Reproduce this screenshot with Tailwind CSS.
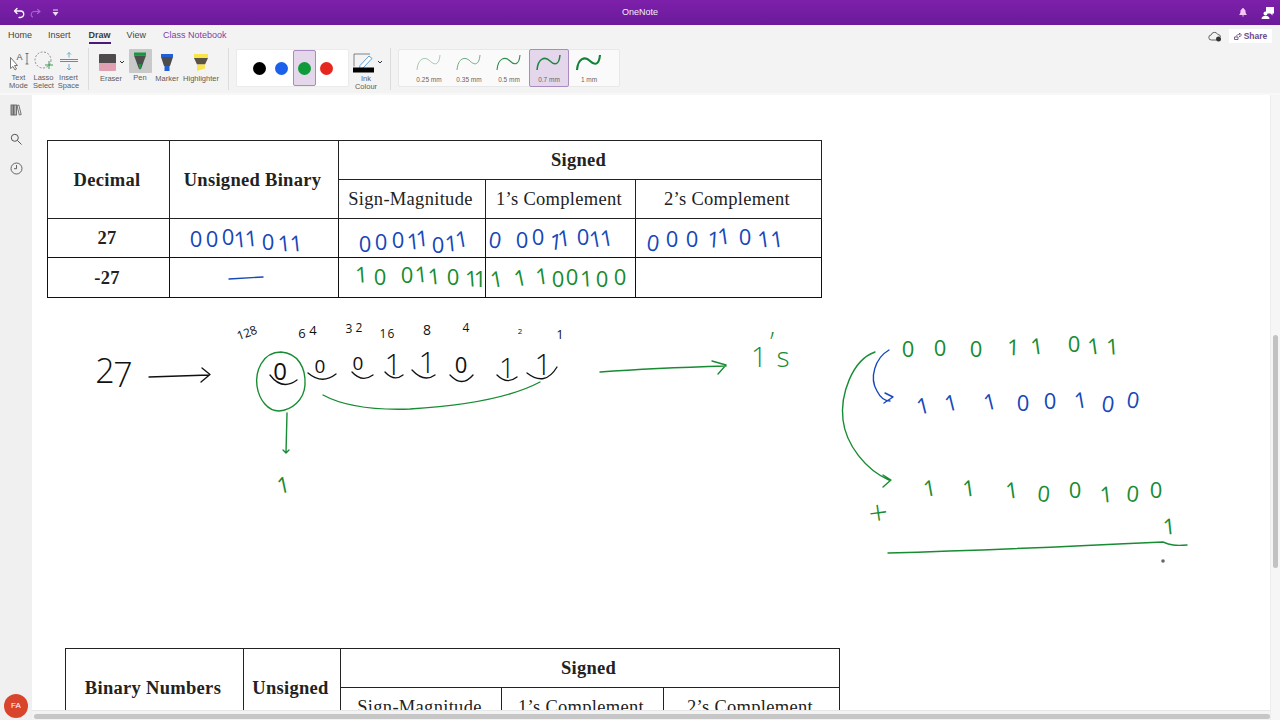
<!DOCTYPE html>
<html lang="en">
<head>
<meta charset="utf-8">
<title>OneNote</title>
<script src="https://cdn.jsdelivr.net/npm/@tailwindcss/browser@4"></script>
</head>
<body class="w-[1280px] h-[720px] overflow-hidden flex flex-col bg-[#f3f3f3] font-['Liberation_Sans',Arial,sans-serif]">

<!-- Title bar -->
<header class="h-[25px] shrink-0 grid grid-cols-3 items-center bg-gradient-to-b from-[#7d20ab] to-[#6b1a9a] text-white">
  <div class="flex items-center gap-[5px] pl-[13px]">
    <svg width="12" height="12" viewBox="0 0 12 12" fill="none" stroke="#fff" stroke-width="1.3" stroke-linecap="round" stroke-linejoin="round"><path d="M4 1.5 1.5 4 4 6.5M1.5 4H7.5a3 3 0 0 1 0 6.5H6"/></svg>
    <svg width="11" height="10" viewBox="0 0 11 10" fill="none" stroke="#a866d0" stroke-width="1.1" stroke-linecap="round" stroke-linejoin="round"><path d="M7.5 1.5 10 3.5 7.5 5.5M10 3.5H4a3 3 0 0 0-1.5 5.5"/></svg>
    <svg class="ml-[6px]" width="7" height="8" viewBox="0 0 7 8" fill="#f0dcf8"><rect x="1" y="0.5" width="5" height="1"/><path d="M0.5 3h6L3.5 7z"/></svg>
  </div>
  <div class="text-center text-[9px] font-medium text-[#f6eefb]">OneNote</div>
  <div class="flex items-center justify-end gap-[14px] pr-[6px]">
    <svg width="8" height="9" viewBox="0 0 8 9" fill="#f4c6f6"><path d="M4 0a1 1 0 0 1 1 1c1.300.5 1.600 1.700 1.600 3 0 1.100.4 1.700 1.100 2.400V7H.3v-.6C1 5.700 1.400 5.100 1.400 4c0-1.300.3-2.500 1.600-3a1 1 0 0 1 1-1zM3 7.600h2A1 1 0 0 1 3 7.600z"/></svg>
    <svg width="13" height="13" viewBox="0 0 13 13" fill="#fff"><path d="M5 1h8v6.500h-1.500V9.500L9.500 7.500H5z"/><circle cx="4.500" cy="7.500" r="2"/><path d="M0.500 13c0-2.500 2-3.200 4-3.200s4 .7 4 3.200z"/></svg>
  </div>
</header>

<!-- Ribbon -->
<section class="h-[70px] shrink-0 flex flex-col text-[#4a4a4a]">
  <div class="h-[22px] relative flex items-center pl-2 pr-2 gap-4 text-[9px] text-[#444]">
    <span>Home</span><span>Insert</span>
    <span class="ml-[2px] relative font-semibold text-[#3a3a3a]">Draw<span class="absolute left-0 right-0 top-[13px] h-[2px] bg-[#4b1a78]"></span></span>
    <span>View</span><span class="ml-[1px] text-[#7b3fa6]">Class Notebook</span>
    <div class="ml-auto flex items-center gap-[7px]">
      <svg width="14" height="11" viewBox="0 0 14 11" fill="none"><path d="M3.500 9a2.500 2.500 0 0 1-.4-5 3.500 3.500 0 0 1 6.600-.6A2.800 2.800 0 0 1 12.500 6" stroke="#555" stroke-width="0.9"/><path d="M3.500 9H8" stroke="#555" stroke-width="0.9"/><circle cx="10.500" cy="8" r="2.500" fill="#333"/></svg>
      <div class="w-[43px] h-[14px] bg-white flex items-center justify-center gap-[2px] text-[8.500px] font-semibold text-[#6d4c86]">
        <svg width="8" height="8" viewBox="0 0 8 8" fill="none" stroke="#6d4c86" stroke-width="0.9"><path d="M0.500 7.500V5h3.500v2.500zM2 4.500C2.500 3 4 2.500 5.500 2.500V1L7.500 3 5.500 5V3.800"/></svg>Share
      </div>
    </div>
  </div>

  <div class="h-[46px] flex items-stretch pl-[6px] text-[7.500px] leading-[8px] text-[#5c5c5c] text-center">
    <!-- Text mode -->
    <div class="w-[25px] flex flex-col items-center">
      <svg class="mt-[2px] h-[24px]" width="24" height="24" viewBox="0 0 24 24" fill="none">
        <text x="12.500" y="11" font-size="9" fill="#555" text-anchor="middle" font-family="Liberation Sans">A</text>
        <path d="M18.500 4.500h3M20 4.500V15M18.500 15h3" stroke="#555" stroke-width="0.8"/>
        <path d="M3.500 8.500v11l2.500-2 2 3.500 1.500-1-2-3.500h3z" fill="#fff" stroke="#555" stroke-width="0.8"/>
      </svg>
      <span class="mt-[1px]">Text<br>Mode</span>
    </div>
    <!-- Lasso -->
    <div class="w-[25px] flex flex-col items-center">
      <svg class="mt-[2px]" width="24" height="24" viewBox="0 0 24 24" fill="none">
        <circle cx="11" cy="11" r="8" stroke="#777" stroke-width="0.8" stroke-dasharray="2 1.500"/>
        <path d="M17 12v8M13 16h8" stroke="#3a9a55" stroke-width="1"/>
      </svg>
      <span class="mt-[1px]">Lasso<br>Select</span>
    </div>
    <!-- Insert space -->
    <div class="w-[25px] flex flex-col items-center">
      <svg class="mt-[2px]" width="24" height="24" viewBox="0 0 24 24" fill="none">
        <path d="M3 10.500h18M3 12.500h18" stroke="#666" stroke-width="0.8"/>
        <path d="M12 3.500v5M10 5.500l2-2 2 2M12 15v6M10 19l2 2 2-2" stroke="#62a8c4" stroke-width="0.9"/>
      </svg>
      <span class="mt-[1px]">Insert<br>Space</span>
    </div>
    <div class="ml-[7px] mt-[1px] mb-[3px] w-px bg-[#dcdcdc]"></div>

    <!-- Eraser -->
    <div class="ml-[7px] w-[30px] flex flex-col items-center">
      <div class="mt-[5px] h-[21px] flex items-center self-start ml-[3px] gap-[3px]">
        <div class="w-[17px] h-[17px] flex flex-col rounded-[1px] overflow-hidden"><div class="h-[9px] bg-[#4f4a4c]"></div><div class="flex-1 bg-[#dfa0b2]"></div></div>
        <svg width="6" height="5" viewBox="0 0 6 5" fill="none" stroke="#333" stroke-width="1"><path d="M1 1l2 2 2-2"/></svg>
      </div>
      <span class="mt-[2px]">Eraser</span>
    </div>
    <!-- Pen -->
    <div class="ml-[2px] w-[24px] flex flex-col items-center">
      <div class="mt-[2px] h-[24px] w-[23px] bg-[#c9c9c9] rounded-[1px] flex justify-center items-center">
        <svg width="14" height="18" viewBox="0 0 14 18"><rect x="1" y="0.500" width="12" height="3" fill="#17983f"/><path d="M1 3.500h12L8 17H6z" fill="#4d4d4d"/><path d="M5.600 12h2.800L7.500 17.500h-1z" fill="#17983f"/></svg>
      </div>
      <span class="mt-[1px]">Pen</span>
    </div>
    <!-- Marker -->
    <div class="ml-[3px] w-[24px] flex flex-col items-center">
      <svg class="mt-[5px] h-[21px]" width="14" height="18" viewBox="0 0 14 18"><rect x="1" y="0.500" width="12" height="3" fill="#1f5fd8"/><path d="M1 3.500h12l-3 9H4z" fill="#4d4d4d"/><rect x="4.500" y="12.500" width="5" height="5" fill="#1f5fd8"/></svg>
      <span class="mt-[2px]">Marker</span>
    </div>
    <!-- Highlighter -->
    <div class="ml-[2px] w-[40px] flex flex-col items-center">
      <svg class="mt-[5px] h-[21px]" width="16" height="18" viewBox="0 0 16 18"><rect x="1" y="0.500" width="14" height="4" fill="#f7e64a"/><path d="M1 4.500h14l-3 6.500H4z" fill="#5a5346"/><path d="M4 11h8v4l-8 2.500z" fill="#f7e64a"/></svg>
      <span class="mt-[2px]">Highlighter</span>
    </div>
    <div class="ml-[7px] mt-[1px] mb-[3px] w-px bg-[#dcdcdc]"></div>

    <!-- Colours -->
    <div class="ml-[7px] mt-[2px] mb-[6px] w-[113px] bg-white rounded-[2px] border border-[#ebebeb] flex items-center pl-[11px]">
      <div class="w-[22.500px] flex justify-center"><span class="w-[13px] h-[13px] rounded-full bg-black"></span></div>
      <div class="w-[22.500px] flex justify-center"><span class="w-[13px] h-[13px] rounded-full bg-[#1a60ea]"></span></div>
      <div class="w-[22.500px] h-[36px] flex items-center justify-center bg-[#e4d6eb] border border-[#a88cbf] rounded-[2px]"><span class="w-[13px] h-[13px] rounded-full bg-[#109a3b]"></span></div>
      <div class="w-[22.500px] flex justify-center"><span class="w-[13px] h-[13px] rounded-full bg-[#e5271f]"></span></div>
    </div>
    <!-- Ink colour -->
    <div class="w-[41px] flex flex-col items-start">
      <div class="mt-[5px] h-[21px] flex items-center ml-[4px] gap-[2px]">
        <svg width="22" height="20" viewBox="0 0 22 20" fill="none">
          <path d="M1 13.500V1h16" stroke="#666" stroke-width="0.8"/>
          <path d="M7 12.500 16 3l3 2.500-9 9.500-3.500 1z" fill="#fff" stroke="#5a9ed6" stroke-width="1"/>
          <rect x="0" y="14.500" width="21" height="5" fill="#000"/>
        </svg>
        <svg width="6" height="5" viewBox="0 0 6 5" fill="none" stroke="#333" stroke-width="1"><path d="M1 1l2 2 2-2"/></svg>
      </div>
      <span class="mt-[2px] w-[34px]">Ink<br>Colour</span>
    </div>
    <div class="mt-[1px] mb-[3px] w-px bg-[#dcdcdc]"></div>

    <!-- Line widths -->
    <div class="ml-[7px] mt-[2px] mb-[6px] w-[222px] bg-[#fafafa] rounded-[2px] border border-[#e8e8e8] flex items-stretch pl-[10px] text-[6.500px] text-[#666]">
      <div class="w-10 flex flex-col items-center">
        <svg class="mt-[2px]" width="28" height="20" viewBox="0 0 28 20" fill="none"><path d="M2 18C3 6 10 4 15 9c4 4 9 5 10-6" stroke="#7fb48f" stroke-width="0.7"/></svg>
        <span class="mt-[4px]">0.25 mm</span>
      </div>
      <div class="w-10 flex flex-col items-center">
        <svg class="mt-[2px]" width="28" height="20" viewBox="0 0 28 20" fill="none"><path d="M2 18C3 6 10 4 15 9c4 4 9 5 10-6" stroke="#5ea476" stroke-width="0.9"/></svg>
        <span class="mt-[4px]">0.35 mm</span>
      </div>
      <div class="w-10 flex flex-col items-center">
        <svg class="mt-[2px]" width="28" height="20" viewBox="0 0 28 20" fill="none"><path d="M2 18C3 6 10 4 15 9c4 4 9 5 10-6" stroke="#2c8d4c" stroke-width="1.100"/></svg>
        <span class="mt-[4px]">0.5 mm</span>
      </div>
      <div class="w-10 -my-px flex flex-col items-center bg-[#e4d6eb] border border-[#a88cbf] rounded-[2px]">
        <svg class="mt-[2px]" width="28" height="20" viewBox="0 0 28 20" fill="none"><path d="M2 18C3 6 10 4 15 9c4 4 9 5 10-6" stroke="#1f8541" stroke-width="1.500"/></svg>
        <span class="mt-[4px]">0.7 mm</span>
      </div>
      <div class="w-10 flex flex-col items-center">
        <svg class="mt-[2px]" width="28" height="20" viewBox="0 0 28 20" fill="none"><path d="M2 18C3 6 10 4 15 9c4 4 9 5 10-6" stroke="#0f8236" stroke-width="2.100"/></svg>
        <span class="mt-[4px]">1 mm</span>
      </div>
    </div>
  </div>
  <div class="h-[2px] bg-[#f8f8f8]"></div>
</section>

<!-- Work area -->
<main class="flex-1 flex min-h-0">
  <!-- Left rail -->
  <aside class="w-[32px] shrink-0 bg-[#f0f0f0] flex flex-col items-center">
    <svg class="mt-[9px]" width="12" height="12" viewBox="0 0 12 12" fill="none" stroke="#666" stroke-width="0.9"><rect x="1" y="1" width="2.500" height="10" fill="#999"/><rect x="4" y="1" width="2.500" height="10" fill="#bbb"/><path d="M7 1.500l1.800-.5 2.400 9.500-1.900.5z"/></svg>
    <svg class="mt-[17px]" width="12" height="12" viewBox="0 0 12 12" fill="none" stroke="#555" stroke-width="1"><circle cx="4.800" cy="4.800" r="3.500"/><path d="M7.500 7.500 11.500 11.500"/></svg>
    <svg class="mt-[17px]" width="13" height="13" viewBox="0 0 13 13" fill="none" stroke="#555" stroke-width="0.9"><circle cx="6.500" cy="6.500" r="5.500"/><path d="M6.500 3v3.700H4"/></svg>
    <div class="mt-auto mb-[2px] w-[24px] h-[24px] rounded-full bg-[#d9452c] text-white text-[8px] font-medium flex items-center justify-center">FA</div>
  </aside>

  <!-- Page column -->
  <div class="w-[1238px] shrink-0 flex flex-col">
    <div class="relative h-[615px] bg-white overflow-hidden font-['Liberation_Serif',serif] text-[#222]">
      <!-- Table one -->
      <table class="ml-[15px] mt-[45px] w-[774px] table-fixed border-collapse text-[18.500px] tracking-[0.3px] text-center [&_td]:pt-[2px] [&_th]:pt-[2px] [&_td]:pr-[3px] [&_th]:pr-[3px]">
        <colgroup><col class="w-[122px]"><col class="w-[169px]"><col class="w-[147px]"><col class="w-[150px]"><col class="w-[186px]"></colgroup>
        <tbody>
          <tr class="h-[39px]">
            <th rowspan="2" class="border border-[#222] font-bold">Decimal</th>
            <th rowspan="2" class="border border-[#222] font-bold">Unsigned Binary</th>
            <th colspan="3" class="border border-[#222] font-bold">Signed</th>
          </tr>
          <tr class="h-[39px]">
            <td class="border border-[#222]">Sign-Magnitude</td>
            <td class="border border-[#222]">1’s Complement</td>
            <td class="border border-[#222]">2’s Complement</td>
          </tr>
          <tr class="h-[39px]">
            <td class="border border-[#111] font-semibold">27</td>
            <td class="border border-[#111]"></td><td class="border border-[#111]"></td><td class="border border-[#111]"></td><td class="border border-[#111]"></td>
          </tr>
          <tr class="h-[40px]">
            <td class="border border-[#111] font-semibold">-27</td>
            <td class="border border-[#111]"></td><td class="border border-[#111]"></td><td class="border border-[#111]"></td><td class="border border-[#111]"></td>
          </tr>
        </tbody>
      </table>

      <!-- Table two -->
      <table class="ml-[33px] mt-[350px] w-[774px] table-fixed border-collapse text-[18.500px] tracking-[0.3px] text-center [&_td]:pt-[2px] [&_th]:pt-[2px] [&_td]:pr-[3px] [&_th]:pr-[3px]">
        <colgroup><col class="w-[178px]"><col class="w-[97px]"><col class="w-[161px]"><col class="w-[162px]"><col class="w-[176px]"></colgroup>
        <tbody>
          <tr class="h-[39px]">
            <th rowspan="2" class="border border-[#222] font-bold">Binary Numbers</th>
            <th rowspan="2" class="border border-[#222] font-bold">Unsigned</th>
            <th colspan="3" class="border border-[#222] font-bold">Signed</th>
          </tr>
          <tr class="h-[39px]">
            <td class="border border-[#222]">Sign-Magnitude</td>
            <td class="border border-[#222]">1’s Complement</td>
            <td class="border border-[#222]">2’s Complement</td>
          </tr>
        </tbody>
      </table>

      <!-- Ink layer -->
      <svg class="absolute inset-0" width="1238" height="615" viewBox="32 95 1238 615" fill="none" stroke-linecap="round" stroke-linejoin="round">
        <!-- Ink written digits -->
        <g font-family="Open Sans, Roboto, sans-serif" font-weight="400" font-size="22" text-anchor="middle">
          <g fill="#1648b8">
            <text x="196 212 228 241 252 268 285 297" y="247 247 245 248 247 250 252 252" rotate="0 0 0 -6 -6 0 -6 -6">00011011</text>
            <text x="365 381 398 414 423 438 452 463" y="252 250 248 250 247 253 252 248" rotate="0 0 0 -6 -6 0 -6 -10">00011011</text>
            <text x="494 522 538 555 565 583 597 608" y="247 248 245 249 247 245 248 247" rotate="8 0 0 6 -8 0 -10 -10">00011011</text>
            <text x="652 672 692 713 725 745 765 778" y="250 247 247 247 245 245 248 248" rotate="8 0 0 4 -8 0 -8 -8">00011011</text>
            <text x="925 953 992 1023 1050 1082 1107 1132" y="415 412 411 411 409 409 411 407" rotate="-14 -14 -14 0 0 -10 8 8">11100100</text>
          </g>
          <g fill="#178c32">
            <text x="362 380 407 422 435 453 472 480" y="283 285 283 283 285 285 287 287" rotate="-4 0 0 -6 -6 0 -4 0">10011011</text>
            <text x="498 522 543 558 572 587 602 620" y="288 287 285 287 285 287 287 285" rotate="-10 -12 -8 0 0 -4 0 0">11100100</text>
            <text x="908 940 976 1013 1038 1074 1095 1113" y="357 356 357 355 355 352 355 355" rotate="0 0 0 2 -8 0 -8 -4">00011011</text>
            <text x="931 970 1013 1043 1075 1107 1132 1156" y="497 497 499 501 498 503 501 498" rotate="-10 -8 -8 6 0 -6 6 0">11100100</text>
            <text x="285" y="494" rotate="-12">1</text>
            <text x="1170" y="535" rotate="-6">1</text>
            <text x="880" y="526" font-size="34" font-weight="300" rotate="-8">+</text>
            <text x="759 772 783" y="367 352 367" font-size="28" font-weight="300">1’s</text>
          </g>
          <g fill="#111">
            <text x="105 123" y="383 387" font-size="34" font-weight="300">27</text>
            <text x="247" y="337" font-size="12" transform="rotate(-20 247 333)">128</text>
            <text x="302 313" y="338 335" font-size="13">64</text>
            <text x="349 359" y="333 332" font-size="12">32</text>
            <text x="383 391" y="338 338" font-size="12">16</text>
            <text x="427" y="335" font-size="14">8</text>
            <text x="466" y="332" font-size="12">4</text>
            <text x="520" y="334" font-size="8">2</text>
            <text x="560" y="339" font-size="13">1</text>
            <text x="280" y="380" font-size="24">0</text>
            <text x="320" y="373" font-size="19">0</text>
            <text x="358" y="370" font-size="19">0</text>
            <text x="393" y="375" font-size="30" font-weight="300">1</text>
            <text x="427" y="373" font-size="30" font-weight="300">1</text>
            <text x="461" y="373" font-size="22">0</text>
            <text x="507" y="378" font-size="28" font-weight="300">1</text>
            <text x="543" y="375" font-size="30" font-weight="300">1</text>
          </g>
        </g>
        <!-- Blue strokes -->
        <g stroke="#1648b8" stroke-width="1.400">
          <path d="M229 279 263 277"/>
          <path d="M889 350C875 358 869 378 877 391 880 397 885 401 890 401"/>
          <path d="M885 393 893 397 884 403"/>
        </g>
        <!-- Black strokes -->
        <g stroke="#111" stroke-width="1.300">
          <path d="M149 377 209 375M202 368 210 374.500 201 382"/>
          <path d="M270 375Q282 391 297 380"/>
          <path d="M308 373Q322 385 336 374"/>
          <path d="M352 372Q362 383 373 375"/>
          <path d="M385 372Q394 382 403 375"/>
          <path d="M412 370Q424 383 435 375"/>
          <path d="M450 375Q462 388 473 375"/>
          <path d="M497 375Q507 385 517 377"/>
          <path d="M527 373Q545 387 557 367"/>
        </g>
        <!-- Green strokes -->
        <g stroke="#178c32" stroke-width="1.400">
          <path d="M281 352C262 352 255 372 257 386 259 400 268 411 279 411 292 410 304 400 305 385 306 368 298 353 281 352z"/>
          <path d="M323 395C345 407 380 410 410 409 460 406 510 398 540 382"/>
          <path d="M287 413 286 453M283 450 286 453 289 450"/>
          <path d="M600 372C640 369 690 367 726 366M712 361 726 365 718 374"/>
          <path d="M875 352C852 360 840 395 843 420 846 445 866 470 889 480M883 475 891 480 883 487"/>
          <path d="M888 553C960 551 1080 546 1163 542 1170 545 1175 546 1187 545"/>
        </g>
        <circle cx="1163" cy="561" r="1.800" fill="#666"/>
      </svg>
    </div>
    <!-- Horizontal scrollbar -->
    <div class="h-[10px] pt-[3px] pl-[2px] bg-[#f3f3f3] border-t border-[#e6e6e6]">
      <div class="h-[5px] w-[1236px] rounded-full bg-[#c6c6c6]"></div>
    </div>
  </div>

  <!-- Vertical scrollbar -->
  <aside class="w-[10px] shrink-0 bg-[#f6f6f6] border-l border-[#ececec] pl-[2px]">
    <div class="mt-[240px] w-[5px] h-[233px] rounded-full bg-[#c2c2c2]"></div>
  </aside>
</main>
</body>
</html>
